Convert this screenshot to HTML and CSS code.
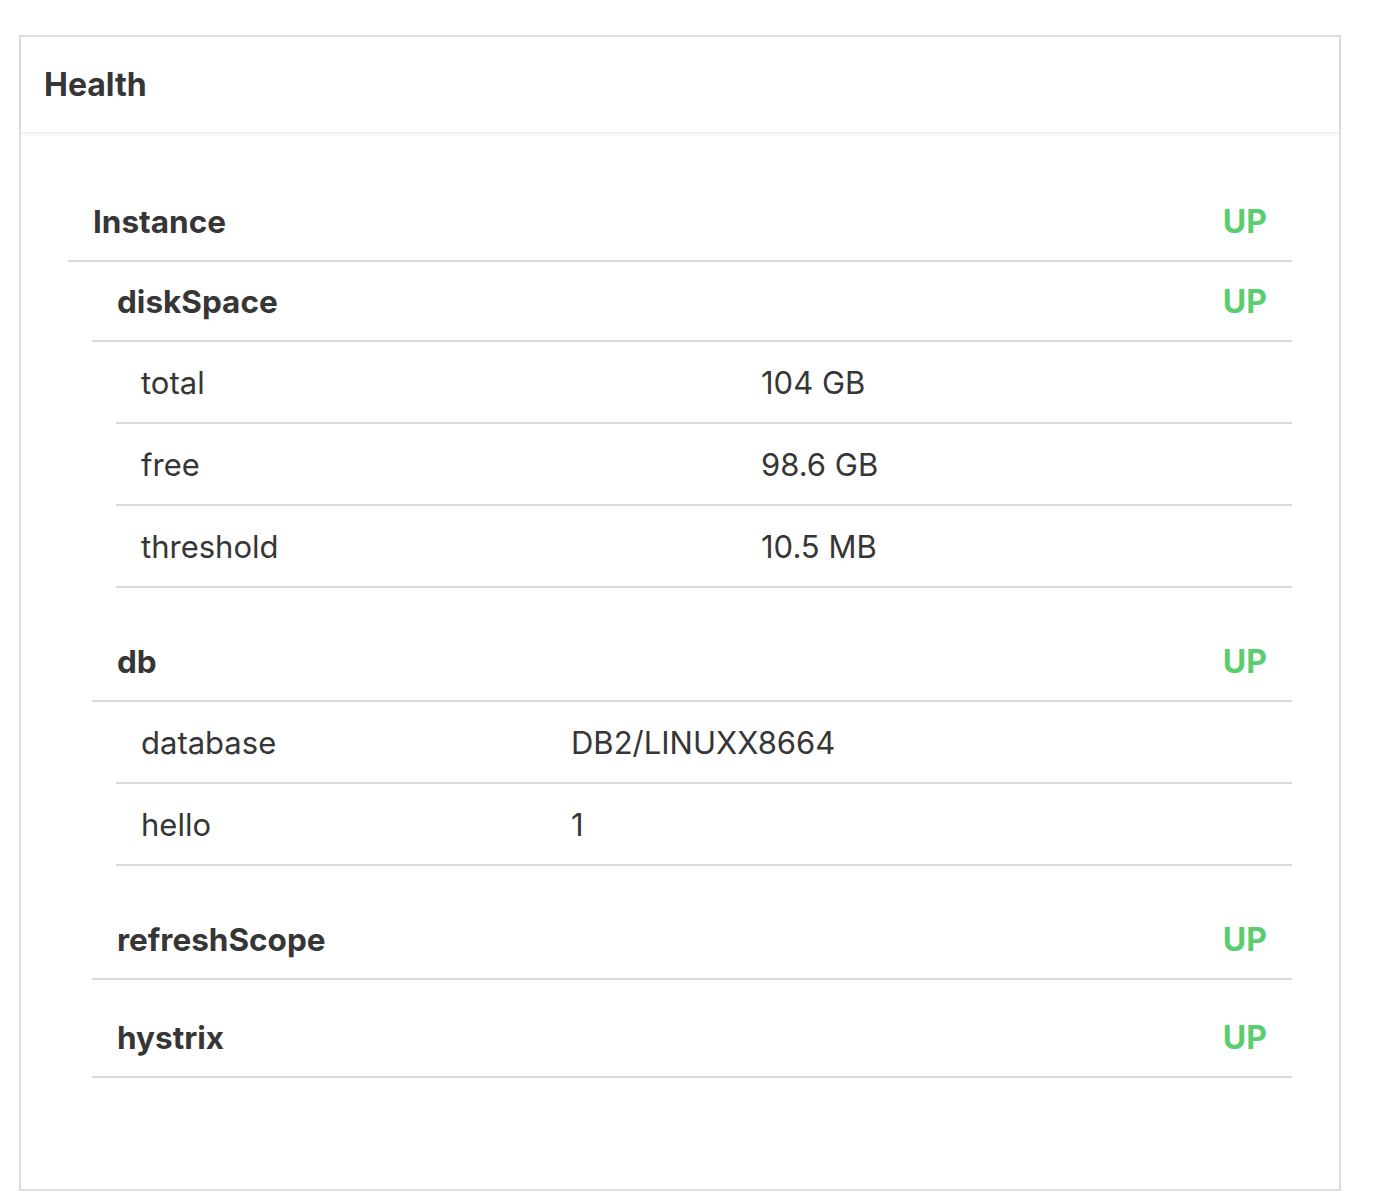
FILE: index.html
```html
<!DOCTYPE html>
<html lang="en">
<head>
<meta charset="utf-8">
<title>Health</title>
<link rel="stylesheet" href="styles.css">
</head>
<body>
<div class="card">
  <header class="card-header">
    <p class="card-title">Health</p>
  </header>
  <div class="card-body">
    <div class="health">
      <div class="row title"><span>Instance</span><span class="up">UP</span></div>
      <div class="sub">
        <div class="row title"><span>diskSpace</span><span class="up">UP</span></div>
        <div class="details disk">
          <div class="row detail"><span>total</span><span>104 GB</span></div>
          <div class="row detail"><span>free</span><span>98.6 GB</span></div>
          <div class="row detail"><span>threshold</span><span>10.5 MB</span></div>
        </div>
        <div class="row title"><span>db</span><span class="up">UP</span></div>
        <div class="details db">
          <div class="row detail"><span>database</span><span>DB2/LINUXX8664</span></div>
          <div class="row detail"><span>hello</span><span>1</span></div>
        </div>
        <div class="row title"><span>refreshScope</span><span class="up">UP</span></div>
        <div class="empty"></div>
        <div class="row title"><span>hystrix</span><span class="up">UP</span></div>
      </div>
    </div>
  </div>
</div>
</body>
</html>
```

FILE: styles.css
```css
html, body {
  background: #ffffff;
}
body {
  margin: 35px 37px 0 19px;
  font-family: "Inter", "Liberation Sans", sans-serif;
  color: #363636;
  font-size: 31px;
}
.card {
  border: 2px solid #dedede;
  box-shadow: 0 2px 6px rgba(10, 10, 10, 0.08);
  height: 1156px;
  box-sizing: border-box;
  background: #fff;
}
.card-header {
  height: 95px;
  display: flex;
  align-items: center;
  padding: 0 23px;
  border-bottom: 1px solid #ececec;
  box-shadow: 0 2px 3px rgba(10, 10, 10, 0.05);
}
.card-title {
  margin: 0;
  font-weight: 700;
  font-size: 32px;
}
.card-body {
  padding: 49px 47px 48px 47px;
}
.row {
  display: flex;
  align-items: center;
  border-bottom: 2px solid #dbdbdb;
  padding: 0 25px;
  box-sizing: border-box;
}
.title {
  height: 80px;
  justify-content: space-between;
  font-weight: 700;
  font-size: 31.5px;
}
.up {
  color: #5ccd6f;
  font-size: 32px;
}
.sub {
  margin-left: 24px;
}
.details {
  margin-left: 24px;
  margin-bottom: 34px;
}
.detail {
  height: 82px;
  display: grid;
}
.disk .detail {
  grid-template-columns: 620px 1fr;
}
.db .detail {
  grid-template-columns: 430px 1fr;
}
.empty {
  height: 18px;
}
```
